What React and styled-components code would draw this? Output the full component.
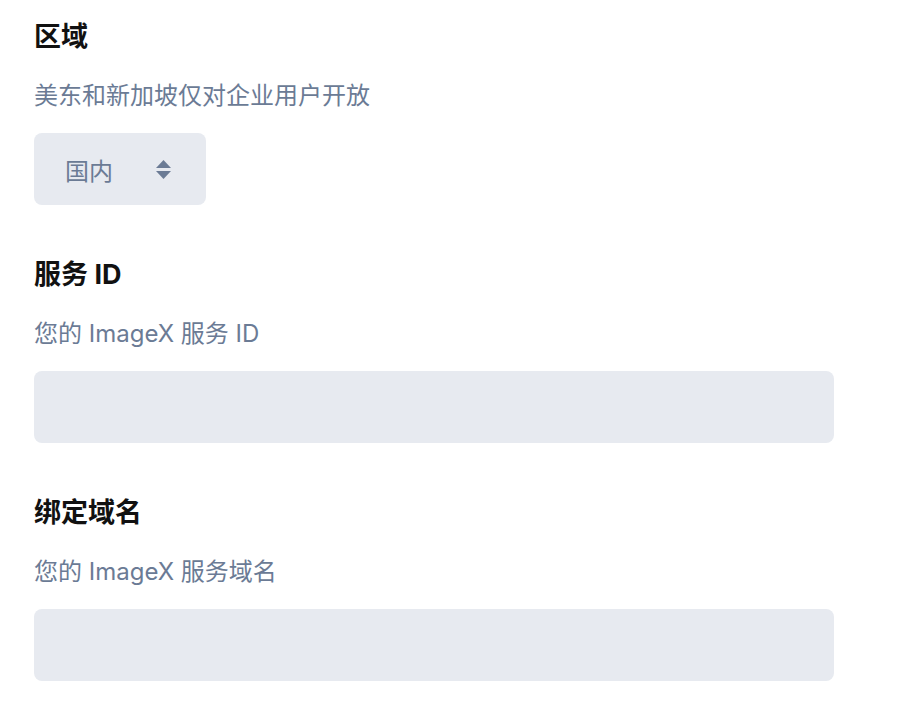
import React from 'react'
import styled, {createGlobalStyle} from 'styled-components';

const GlobalStyle = createGlobalStyle`
body{
    margin: 0;
    background: #ffffff;
    font-family: "Inter", "Noto Sans CJK SC", sans-serif;
}
`;

const fields = [
    {title: '服务 ID', hint: '您的 ImageX 服务 ID'},
    {title: '绑定域名', hint: '您的 ImageX 服务域名'},
];

const App = () => {
    return (
        <>
            <GlobalStyle/>
            <Form>
                <Field>
                    <Label>区域</Label>
                    <Hint>美东和新加坡仅对企业用户开放</Hint>
                    <Select>
                        <span>国内</span>
                        <svg width="15" height="20" viewBox="0 0 15 20">
                            <path d="M7.5 1 L15 9 L0 9 Z" fill="#6b7b95"/>
                            <path d="M0 12 L15 12 L7.5 20 Z" fill="#6b7b95"/>
                        </svg>
                    </Select>
                </Field>
                {fields.map((f) => (
                    <Field key={f.title}>
                        <Label>{f.title}</Label>
                        <Hint>{f.hint}</Hint>
                        <Input type="text"/>
                    </Field>
                ))}
            </Form>
        </>
    );
};

const Form = styled.div`
display: flex;
flex-direction: column;
gap: 52px;
padding: 19px 0 0 34px;
`;

const Field = styled.div`
display: flex;
flex-direction: column;
align-items: flex-start;
`;

const Label = styled.h3`
margin: 0;
font-size: 27px;
line-height: 36px;
font-weight: 700;
color: #111111;
`;

const Hint = styled.p`
margin: 25px 0 21px 0;
font-size: 24px;
line-height: 32px;
color: #6b7b95;
`;

const Select = styled.div`
display: flex;
align-items: center;
justify-content: space-between;
box-sizing: border-box;
width: 172px;
height: 72px;
padding: 0 35px 0 31px;
background: #e7eaf0;
border-radius: 8px;
font-size: 24px;
color: #6b7b95;
`;

const Input = styled.input`
box-sizing: border-box;
width: 800px;
height: 72px;
border: none;
outline: none;
background: #e7eaf0;
border-radius: 8px;
`;

export default App;
